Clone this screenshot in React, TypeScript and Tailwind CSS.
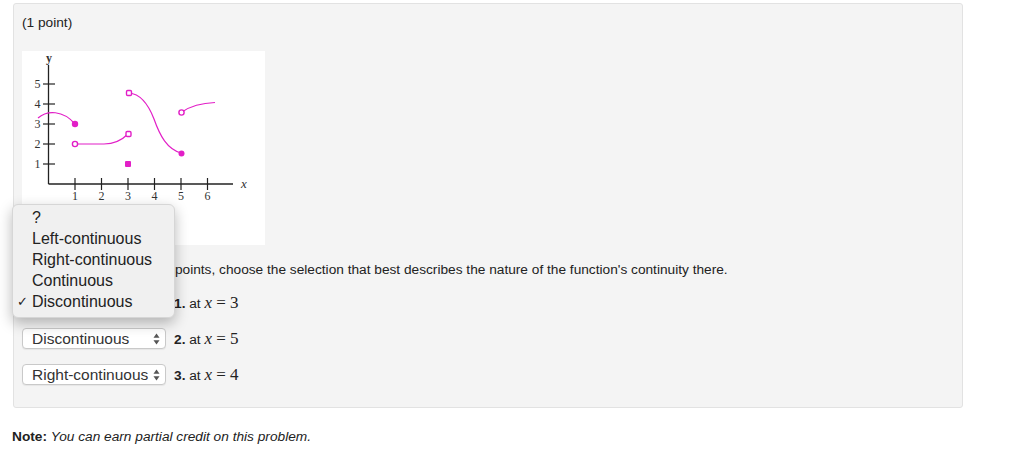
import React from 'react';

const PINK = '#e21fc7';

// x / y units of the graph picture
const X = (u: number) => 26.5 + 26.5 * u;
const Y = (v: number) => 133 - 20 * v;

function Graph() {
  return (
    <div className="w-[243px] h-[194px] bg-white">
      <svg width="243" height="194" viewBox="0 0 243 194">
        {/* axes */}
        <line x1={X(0)} y1={Y(0)} x2="211" y2={Y(0)} stroke="#222" strokeWidth="1.3" />
        <line x1={X(0)} y1={Y(0)} x2={X(0)} y2="14" stroke="#222" strokeWidth="1.3" />
        <text x="27" y="11" fontSize="12" fontWeight="bold" fontFamily="'Liberation Serif', serif" textAnchor="middle" fill="#333">y</text>
        <text x="222" y="137" fontSize="13" fontStyle="italic" fontFamily="'Liberation Serif', serif" textAnchor="middle" fill="#333">x</text>
        {[1, 2, 3, 4, 5].map((v) => (
          <g key={v}>
            <line x1="21" y1={Y(v)} x2="33" y2={Y(v)} stroke="#222" strokeWidth="1.2" />
            <text x="18.5" y={Y(v) + 4} fontSize="12" fontFamily="'Liberation Serif', serif" textAnchor="end" fill="#333">{v}</text>
          </g>
        ))}
        {[1, 2, 3, 4, 5, 6].map((u) => (
          <g key={u}>
            <line x1={X(u)} y1="127" x2={X(u)} y2="139" stroke="#222" strokeWidth="1.2" />
            <text x={X(u)} y="148.5" fontSize="12" fontFamily="'Liberation Serif', serif" textAnchor="middle" fill="#333">{u}</text>
          </g>
        ))}

        {/* function pieces */}
        <g fill="none" stroke={PINK} strokeWidth="1.2">
          <path d="M16,67 C25,59 41,59 53,73" />
          <path d="M53,93 L82,93 C93,93 100,89 106,83" />
          <path d="M107,42 C120,43 127,55 132,68 C138,85 145,98 159,102" />
          <path d="M160,61 C170,54 180,52 193,51.5" />
        </g>
        {/* filled dots */}
        <g fill={PINK}>
          <circle cx="53" cy="73" r="3.2" />
          <rect x="103" y="110" width="6" height="6" rx="1" />
          <circle cx="159.5" cy="102.5" r="3" />
        </g>
        {/* open dots */}
        <g fill="white" stroke={PINK} strokeWidth="1.4">
          <circle cx="53" cy="93" r="2.6" />
          <rect x="104" y="80.5" width="5" height="5" rx="1.2" />
          <rect x="104.5" y="39.5" width="5" height="5" rx="1.2" />
          <circle cx="159.5" cy="61.5" r="2.6" />
        </g>
      </svg>
    </div>
  );
}

function Arrows() {
  return (
    <svg width="7" height="12" viewBox="0 0 7 12" className="shrink-0">
      <path d="M3.5 0.5 L6.5 4.8 L0.5 4.8 Z" fill="#555" />
      <path d="M3.5 11.5 L6.5 7.2 L0.5 7.2 Z" fill="#555" />
    </svg>
  );
}

function FakeSelect({ value }: { value: string }) {
  return (
    <div className="w-[144px] h-[21px] shrink-0 flex items-center justify-between pl-[9px] pr-[5px] bg-white border border-[#c9c9c9] rounded-[4px] shadow-[0_1px_1px_rgba(0,0,0,0.06)] text-[15.5px] leading-[19px] text-[#333]">
      <span className="whitespace-nowrap">{value}</span>
      <Arrows />
    </div>
  );
}

function Row({ n, value, at }: { n: number; value: string; at: number }) {
  return (
    <div className="flex items-center gap-[8px] h-[21px]">
      <FakeSelect value={value} />
      <span className="text-[13.7px] text-[#222] whitespace-nowrap">
        <b>{n}.</b> at{' '}
        <span className="font-['Liberation_Serif',serif] text-[17px]">
          <i>x</i> = {at}
        </span>
      </span>
    </div>
  );
}

export default function App() {
  const options = ['?', 'Left-continuous', 'Right-continuous', 'Continuous', 'Discontinuous'];

  return (
    <div className="w-[1024px] h-[457px] bg-white font-['Liberation_Sans',Arial,sans-serif] text-[#222] pt-[3px]">
      <div className="relative ml-[13px] w-[950px] h-[405px] bg-[#f4f4f4] border border-[#e2e2e2] rounded-[3px] pl-[8px] pt-[11px]">
        <p className="text-[13.7px] leading-[16px]">(1 point)</p>

        <div className="mt-[20px]">
          <Graph />
        </div>

        <p className="mt-[17px] text-[13.7px] leading-[16px] whitespace-nowrap">
          For each of the following points, choose the selection that best describes the nature of the function's continuity there.
        </p>

        <div className="mt-[14px] flex flex-col gap-[15px]">
          <Row n={1} value="Discontinuous" at={3} />
          <Row n={2} value="Discontinuous" at={5} />
          <Row n={3} value="Right-continuous" at={4} />
        </div>

        {/* open select menu for the first row */}
        <div className="absolute left-[-2px] top-[200px] w-[163px] h-[114px] bg-[#f0f0f0] border border-[#d6d6d6] rounded-[6px] shadow-[0_5px_14px_rgba(0,0,0,0.28)] pt-[2px] pl-[19px] text-[16px] leading-[21px] text-[#222]">
          {options.map((o) => (
            <div key={o} className="relative whitespace-nowrap">
              {o === 'Discontinuous' && (
                <span className="absolute left-[-15px] top-0 text-[13px]">✓</span>
              )}
              {o}
            </div>
          ))}
        </div>
      </div>

      <p className="mt-[21px] ml-[12px] text-[13.7px] leading-[16px]">
        <b>Note:</b> <i>You can earn partial credit on this problem.</i>
      </p>
    </div>
  );
}
